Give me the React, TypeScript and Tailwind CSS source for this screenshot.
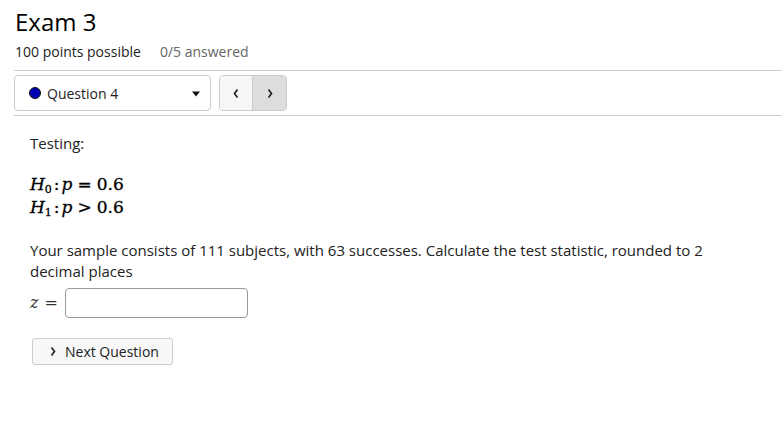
export default function App() {
  return (
    <div className="min-h-[427px] w-[782px] bg-white font-['Open_Sans',sans-serif] text-[#222]">
      <div className="pl-[15px] pt-[6px]">
        <h1 className="text-[24px] leading-[32px] text-black">Exam 3</h1>
        <div className="mt-[4px] flex gap-[19px] text-[14px] leading-[20px]">
          <span className="text-[#222]">100 points possible</span>
          <span className="text-[#666]">0/5 answered</span>
        </div>
      </div>

      <div className="ml-[14px] mt-[8px] border-t border-[#ccc]" />

      <div className="ml-[14px] mt-[4px] flex items-center gap-[8px]">
        <div className="flex h-[36px] w-[197px] items-center rounded-[4px] border border-[#ccc] bg-white pl-[14px] pr-[9px]">
          <span className="h-[12px] w-[12px] rounded-full border border-[#111] bg-[#0000b0]" />
          <span className="ml-[6px] flex-1 text-[14px] text-[#222]">Question 4</span>
          <svg width="10" height="6" viewBox="0 0 10 6" className="mb-[-2px]">
            <path d="M1 0.5h8L5 5.5z" fill="#111" />
          </svg>
        </div>
        <div className="flex h-[36px] overflow-hidden rounded-[4px] border border-[#ccc]">
          <button className="flex w-[33px] items-center justify-center border-r border-[#ccc] bg-[#f6f6f6]">
            <svg width="8" height="11" viewBox="0 0 8 11">
              <path d="M5.5 1.5L2.5 5.5l3 4" fill="none" stroke="#222" strokeWidth="1.7" />
            </svg>
          </button>
          <button className="flex w-[33px] items-center justify-center bg-[#ddd]">
            <svg width="8" height="11" viewBox="0 0 8 11">
              <path d="M2.5 1.5L5.5 5.5l-3 4" fill="none" stroke="#222" strokeWidth="1.7" />
            </svg>
          </button>
        </div>
      </div>

      <div className="ml-[14px] mt-[4px] border-t border-[#ccc]" />

      <div className="pl-[30px] pt-[17px] text-[15px] leading-[21px] text-[#222]">
        <p>Testing:</p>

        <div className="mt-[19px] font-['DejaVu_Serif',serif] text-[17px] leading-[23px] text-black [-webkit-text-stroke:0.3px_#000]">
          <div>
            <i>H</i>
            <sub className="text-[11px] not-italic">0</sub>
            <span className="mx-[2px]">:</span>
            <i>p</i>
            <span className="mx-[5px]">=</span>
            0.6
          </div>
          <div>
            <i>H</i>
            <sub className="text-[11px] not-italic">1</sub>
            <span className="mx-[2px]">:</span>
            <i>p</i>
            <span className="mx-[5px]">&gt;</span>
            0.6
          </div>
        </div>

        <p className="mt-[21px] w-[690px]">
          Your sample consists of 111 subjects, with 63 successes. Calculate the test statistic, rounded to 2 decimal places
        </p>

        <div className="mt-[6px] flex items-center">
          <span className="font-['DejaVu_Serif',serif] text-[16px] leading-[20px] text-[#333]">
            <i>z</i>
            <span className="ml-[6px]">=</span>
          </span>
          <input
            type="text"
            className="ml-[7px] h-[30px] w-[183px] rounded-[4px] border border-[#999] bg-white px-2 outline-none"
          />
        </div>

        <button className="ml-[2px] mt-[20px] flex h-[27px] items-center rounded-[3px] border border-[#ccc] bg-[#f8f8f8] pl-[16px] pr-[13px] text-[14px] text-[#222]">
          <svg width="8" height="11" viewBox="0 0 8 11" className="mr-[8px]">
            <path d="M2.5 1.5L5.5 5.5l-3 4" fill="none" stroke="#222" strokeWidth="1.7" />
          </svg>
          Next Question
        </button>
      </div>
    </div>
  );
}
